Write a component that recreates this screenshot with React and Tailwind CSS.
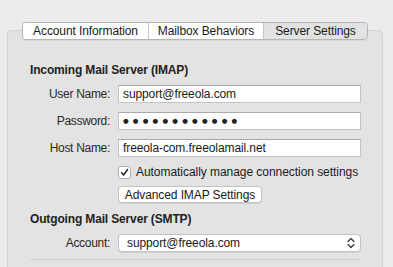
import React from "react";

const font = { fontFamily: "'Liberation Sans', Arial, sans-serif" };

function Field({ children }) {
  return (
    <div className="h-[18px] w-[243px] bg-white border border-[#c4c4c4] border-t-[#a9a9a9] flex items-center pl-[4px] text-[12px] tracking-[-0.1px] text-[#1a1a1a] leading-none whitespace-nowrap">
      {children}
    </div>
  );
}

function Row({ label, children, className = "" }) {
  return (
    <div className={"flex items-center " + className}>
      <div className="w-[80px] shrink-0 text-right text-[12px] tracking-[-0.3px] text-[#2a2a2a] whitespace-nowrap">{label}</div>
      <div className="ml-[8px] shrink-0">{children}</div>
    </div>
  );
}

export default function App() {
  return (
    <div className="w-[393px] h-[267px] overflow-hidden bg-[#ececec] pt-[30px] pl-[7px]" style={font}>
      <div className="w-[376px] h-[260px] border border-[#d3d3d3] rounded-tl-[4px] rounded-tr-[4px] bg-[#e3e3e3]">
        <div className="flex justify-center -mt-[9px]">
          <div className="flex h-[18px] rounded-[4px] border border-[#b5b5b5] overflow-hidden shadow-[0_1px_0_rgba(0,0,0,0.05)] text-[12px] tracking-[-0.1px] text-[#1a1a1a] whitespace-nowrap">
            <div className="w-[126px] bg-white flex items-center justify-center border-r border-[#c8c8c8]">Account Information</div>
            <div className="w-[115px] bg-white flex items-center justify-center border-r border-[#c8c8c8]">Mailbox Behaviors</div>
            <div className="w-[103px] bg-[#e2e2e2] flex items-center justify-center">Server Settings</div>
          </div>
        </div>

        <div className="pl-[22px] flex flex-col items-start">
          <div className="mt-[22px] text-[12px] tracking-[-0.15px] font-bold text-[#222] leading-[16px] whitespace-nowrap">Incoming Mail Server (IMAP)</div>
          <div className="mt-[7px] flex flex-col gap-[9px]">
            <Row label="User Name:">
              <Field>support@freeola.com</Field>
            </Row>
            <Row label="Password:">
              <Field>
                <span className="text-[6.5px] tracking-[4.2px] text-[#222]" style={{ fontFamily: "'DejaVu Sans', sans-serif" }}>●●●●●●●●●●●●</span>
              </Field>
            </Row>
            <Row label="Host Name:">
              <Field>freeola-com.freeolamail.net</Field>
            </Row>
          </div>
          <Row label="" className="mt-[8px]">
            <div className="flex items-center h-[14px]">
              <div className="w-[13px] h-[13px] shrink-0 rounded-[3px] bg-white border border-[#b0b0b0] flex items-center justify-center">
                <svg width="9" height="9" viewBox="0 0 9 9">
                  <path d="M1.5 4.8 L3.6 7 L7.6 1.5" fill="none" stroke="#222" strokeWidth="1.4" strokeLinecap="round" strokeLinejoin="round" />
                </svg>
              </div>
              <span className="ml-[5px] text-[12px] tracking-[-0.05px] text-[#1a1a1a] whitespace-nowrap">Automatically manage connection settings</span>
            </div>
          </Row>
          <Row label="" className="mt-[7px]">
            <div className="h-[17px] w-[144px] bg-white rounded-[4px] border border-[#c2c2c2] shadow-[0_1px_0_rgba(0,0,0,0.08)] flex items-center justify-center text-[12px] tracking-[-0.1px] text-[#1a1a1a] whitespace-nowrap">
              Advanced IMAP Settings
            </div>
          </Row>
          <div className="mt-[8px] text-[12px] tracking-[-0.15px] font-bold text-[#222] leading-[16px] whitespace-nowrap">Outgoing Mail Server (SMTP)</div>
          <Row label="Account:" className="mt-[7px]">
            <div className="h-[18px] w-[243px] bg-white rounded-[4px] border border-[#c2c2c2] shadow-[0_1px_0_rgba(0,0,0,0.08)] flex items-center pl-[8px] pr-[5px] text-[12px] tracking-[-0.1px] text-[#1a1a1a] whitespace-nowrap">
              <span className="flex-1">support@freeola.com</span>
              <svg width="8" height="12" viewBox="0 0 8 12">
                <path d="M1 4.5 L4 1.5 L7 4.5 M1 7.5 L4 10.5 L7 7.5" fill="none" stroke="#333" strokeWidth="1.2" strokeLinecap="round" strokeLinejoin="round" />
              </svg>
            </div>
          </Row>
          <div className="mt-[7px] w-[330px] h-px bg-[#cfcfcf]"></div>
        </div>
      </div>
    </div>
  );
}
